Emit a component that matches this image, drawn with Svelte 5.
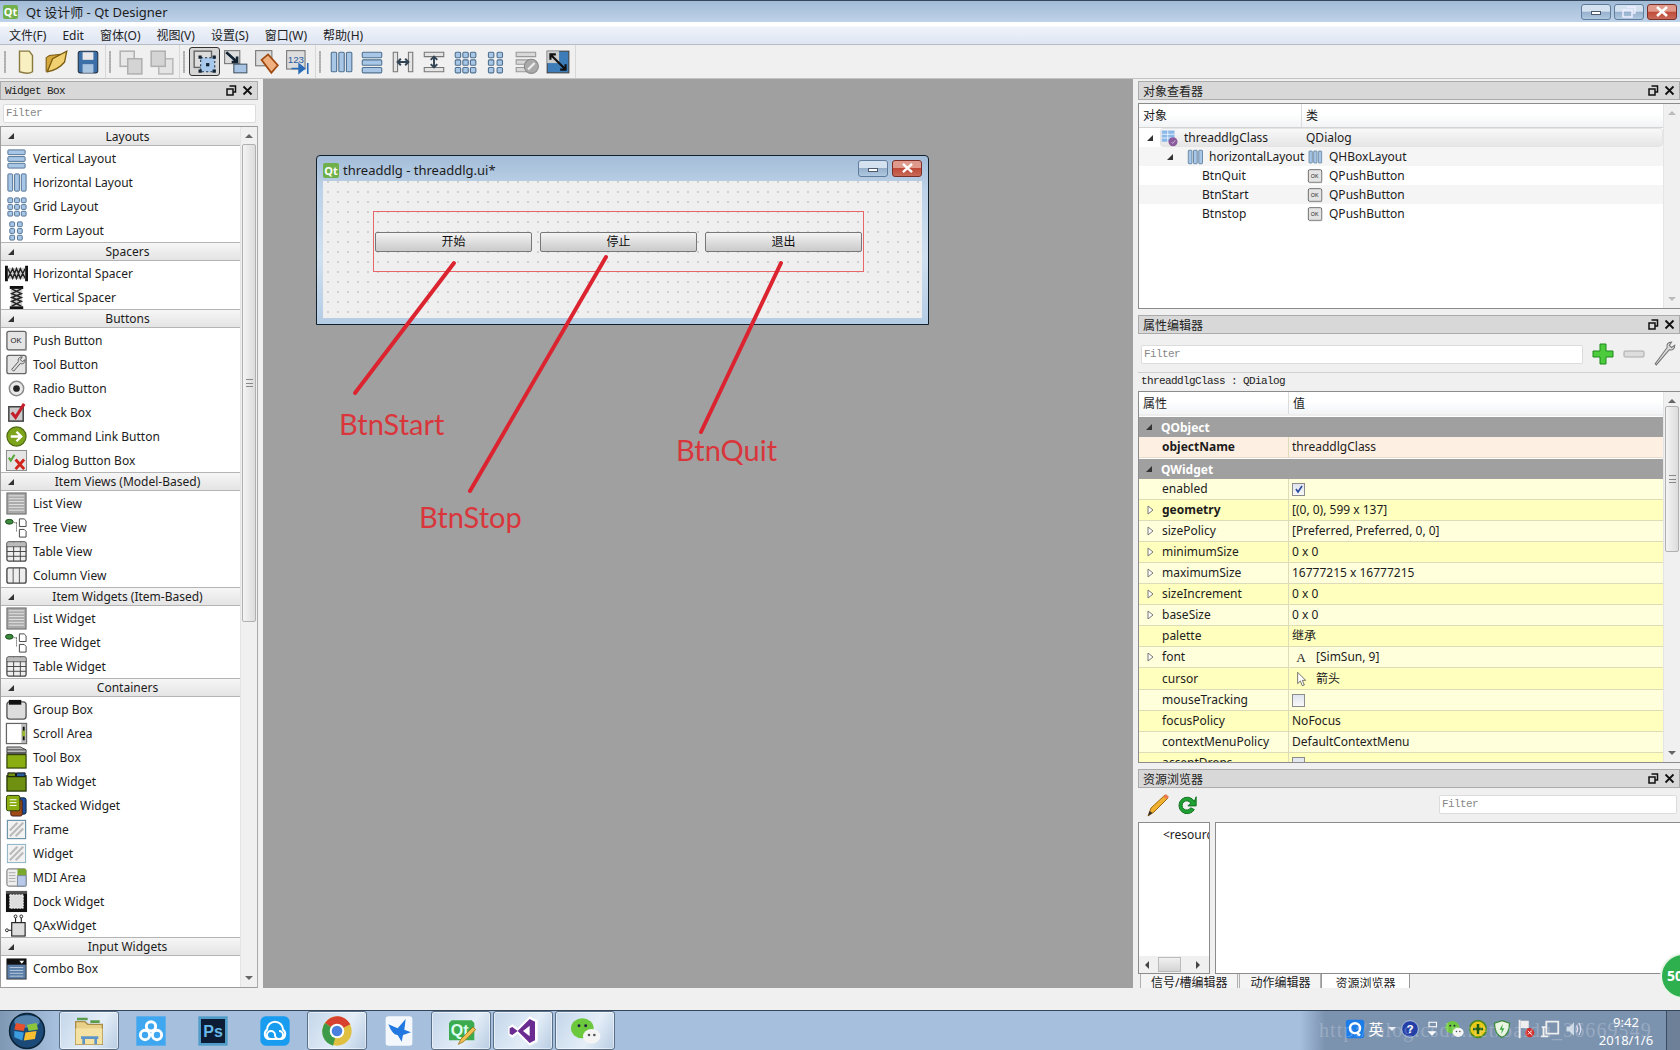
<script>
  const b = (x, y, w, h, f = '#a8c6e6', s = '#4f7090') =>
    `<rect x="${x}" y="${y}" width="${w}" height="${h}" rx="1" fill="${f}" stroke="${s}"/>`;
  const cells = (xs, ys, s) => xs.flatMap((x) => ys.map((y) => b(x, y, s, s))).join('');
  const p = (d, f = 'none', s = '#333', w = 1) => `<path d="${d}" fill="${f}" stroke="${s}" stroke-width="${w}"/>`;
  const lines = (x1, x2, ys, c = '#888') => ys.map((y) => `<path d="M${x1} ${y}H${x2}" stroke="${c}"/>`).join('');
  const okBtn = `<rect x="2" y="2.5" width="20" height="19" rx="2" fill="#e4e4e4" stroke="#666" stroke-width="1.4"/><path d="M3 22h19V6" fill="none" stroke="#999" stroke-width="1.4"/><text x="11.5" y="15" font-size="8" font-family="Liberation Sans" text-anchor="middle" fill="#222">OK</text>`;
  const listI = `<rect x="2" y="1" width="20" height="22" fill="#aaa" stroke="#666"/>` + lines(4, 20, [4, 7, 10, 13, 16, 19], '#e4e4e4');
  const treeI = `<ellipse cx="4.5" cy="6" rx="4" ry="2.5" fill="#3c8a3c" stroke="#1c4a1c"/><path d="M9 7h3M12 7v10" stroke="#333" stroke-dasharray="1 1"/><path d="M15 3h5l2 2v6h-7zM15 14h5l2 2v6h-7z" fill="#fff" stroke="#444"/>`;
  const tableI = `<rect x="2" y="2" width="20" height="20" rx="2" fill="#eee" stroke="#444" stroke-width="1.3"/><path d="M2 7h20M2 12h20M2 17h20M9 2v20M16 2v20" stroke="#444"/><path d="M2.5 2.5h19v4h-19z" fill="#bbb"/>`;
  const hatch = `<rect x="2.5" y="2.5" width="19" height="19" fill="#f2f2f2" stroke="#6a93a8" stroke-width="1.2"/><path d="M5 13l8-8M5 19l14-14M11 19l8-8" stroke="#bbb" stroke-width="2.4"/>`;
  const hlay = b(3, 3, 5, 18) + b(10, 3, 5, 18) + b(17, 3, 5, 18);
  const vlay = b(3, 3, 18, 5) + b(3, 10, 18, 5) + b(3, 17, 18, 5);

  const icons = {
    vlayout: vlay,
    hlayout: hlay,
    grid: cells([3, 10, 17], [3, 10, 17], 5),
    form: cells([5, 13], [3, 10, 17], 5),
    hspacer: `<path d="M1.5 4v16M22.5 4v16" stroke="#111" stroke-width="3"/><path d="M3 6h18v12H3z" fill="#ccc"/><path d="M3 7l5 10 4-10 4 10 5-10M3 17l5-10 4 10 4-10 5 10" fill="none" stroke="#222" stroke-width="1.5"/>`,
    vspacer: `<path d="M5 1.5h14M5 22.5h14" stroke="#111" stroke-width="3"/><path d="M6 3h12v18H6z" fill="#ccc"/><path d="M7 3l10 5-10 4 10 4-10 5M17 3L7 8l10 4-10 4 10 5" fill="none" stroke="#222" stroke-width="1.5"/>`,
    push: okBtn,
    tool: `<rect x="2" y="2.5" width="20" height="19" rx="2" fill="#e4e4e4" stroke="#666" stroke-width="1.4"/>` + p('M7 17l7-8c-1-3 1-5 4-5l-2 3 2 2 3-2c0 3-2 5-5 4l-7 8z', '#ddd', '#555'),
    radio: `<circle cx="12" cy="12" r="7.5" fill="#e8e8e8" stroke="#888" stroke-width="1.5"/><circle cx="12" cy="12" r="3.5" fill="#222"/>`,
    check: `<rect x="4" y="6" width="15" height="15" fill="#ccc" stroke="#444" stroke-width="1.6"/><path d="M7 12l4 5 9-14" fill="none" stroke="#c4202c" stroke-width="3.2"/>`,
    link: `<circle cx="12" cy="12" r="10" fill="#7da51c" stroke="#4e6a10" stroke-width="1.2"/><path d="M6 12h10M12 7l5 5-5 5" fill="none" stroke="#fff" stroke-width="2.4"/>`,
    dialogbb: `<rect x="1.5" y="1.5" width="21" height="21" fill="#e4e4e4" stroke="#888"/><path d="M4 9l2 3 4-6" fill="none" stroke="#5aa63c" stroke-width="2.2"/><path d="M11 11l9 10M20 11l-9 10" stroke="#d0241c" stroke-width="3"/>`,
    list: listI,
    tree: treeI,
    table: tableI,
    column: `<rect x="2" y="4" width="20" height="16" rx="2" fill="#eee" stroke="#444" stroke-width="1.4"/><path d="M8.5 4v16M15 4v16" stroke="#555"/>`,
    group: `<rect x="2" y="4" width="20" height="18" rx="3" fill="#ddd" stroke="#555" stroke-width="1.4"/><path d="M4 2h13v5H4z" fill="#111"/>`,
    scroll: `<rect x="1.5" y="1.5" width="21" height="21" fill="#fff" stroke="#666" stroke-width="1.3"/><path d="M17 2h5v20h-5z" fill="#bbb"/><path d="M19.5 5v14" stroke="#111" stroke-width="2"/><path d="M18 9h3v6h-3z" fill="#9ab82c"/>`,
    toolbox: `<path d="M2 1h14l6 3v4H2z" fill="#bbb" stroke="#444"/><path d="M2 4h20M2 7h20" stroke="#444"/><rect x="2" y="9" width="20" height="14" fill="#8aae12" stroke="#2a3a08" stroke-width="1.2"/>`,
    tab: `<rect x="2" y="6" width="20" height="16" fill="#6f9010" stroke="#1c2a04" stroke-width="1.2"/><path d="M3 3h8v4H3z" fill="#6f9010" stroke="#111"/><path d="M12 3h9v4h-9z" fill="#2a5c9c" stroke="#111"/>`,
    stacked: `<rect x="10" y="4" width="12" height="17" rx="2" fill="#1d4f9c" stroke="#123"/><rect x="6" y="6" width="12" height="17" rx="2" fill="#a04a16" stroke="#422"/><rect x="1.5" y="1.5" width="14" height="16" rx="2" fill="#8aae12" stroke="#2a3a08"/><path d="M5 6h7M5 9h7M5 12h7" stroke="#fff"/>`,
    frame: hatch,
    widget: `<rect x="2.5" y="2.5" width="19" height="19" fill="#f2f2f2" stroke="#8ab0c0"/><path d="M5 13l8-8M5 19l14-14M11 19l8-8" stroke="#bbb" stroke-width="2.4"/>`,
    mdi: `<rect x="2" y="3" width="20" height="18" rx="2" fill="#eee" stroke="#666"/><path d="M13 3h9v7h-9z" fill="#7aa82c"/><path d="M13 10h9v11h-9z" fill="#b8c8e8" stroke="#789"/>` + lines(4, 11, [7, 10, 13, 16], '#aaa'),
    dock: `<rect x="1" y="1" width="22" height="22" fill="#111"/><path d="M1 1h22v3H1z" fill="#555"/><rect x="5" y="5" width="14" height="14" fill="#ddd" stroke="#fff" stroke-dasharray="2 1"/>`,
    qax: `<rect x="7" y="9" width="14" height="14" fill="#ddd" stroke="#222" stroke-width="1.2"/><path d="M1 17h6M11 9V4M17 9V4" stroke="#222" stroke-width="1.2"/><circle cx="2" cy="17" r="1.5" fill="#fff" stroke="#222"/><circle cx="11" cy="2.5" r="1.5" fill="#fff" stroke="#222"/><circle cx="17" cy="2.5" r="1.5" fill="#fff" stroke="#222"/>`,
    combo: `<rect x="2" y="2" width="20" height="21" fill="#5a7ea8" stroke="#333"/><path d="M2 2h20v6H2z" fill="#111"/><path d="M15 4h5l-2.500 3z" fill="#fff"/>` + lines(5, 19, [11, 14, 17, 20], '#bcd'),
    fnew: p('M6 2h9l3 4v15c-3 2-9 1-12 0z', '#f8f0c0', '#8a7a40', 1.3),
    fopen: `<path d="M2 21V8l3-2 10-1-1 4" fill="#d4a83c" stroke="#7c5c10"/><path d="M3 21l5-12 13-7-2 10c-4 5-10 8-16 9z" fill="#f0d070" stroke="#7c5c10" stroke-width="1.2"/>`,
    fsave: `<rect x="3" y="2" width="18" height="20" rx="2" fill="#3c6ea8" stroke="#234"/><rect x="7" y="3" width="10" height="7" fill="#e8e8e8"/><rect x="7" y="14" width="10" height="8" fill="#a8c4e0"/>`,
    copya: `<rect x="2" y="2" width="13" height="14" fill="#e8e8e8" stroke="#b0b0b0" stroke-width="1.4"/><rect x="9" y="9" width="13" height="14" fill="#d4d4d4" stroke="#b0b0b0" stroke-width="1.4"/>`,
    copyb: `<rect x="9" y="9" width="13" height="14" fill="#e4e4e4" stroke="#b8b8b8" stroke-width="1.4"/><rect x="2" y="2" width="13" height="14" fill="#d4d4d4" stroke="#b0b0b0" stroke-width="1.4"/>`,
    edit: `<rect x="2" y="2" width="16" height="15" fill="#ddd" stroke="#666" stroke-width="1.3"/><rect x="8" y="8" width="13" height="13" fill="#a8c8ec" stroke="#234" stroke-dasharray="2 2"/><rect x="13" y="13" width="3" height="3" fill="#123"/><path d="M6 6h3v3H6zM19 6h3v3h-3zM6 19h3v3H6zM19 19h3v3h-3z" fill="#123"/>`,
    signal: `<rect x="1.500" y="1.500" width="14" height="12" fill="#ddd" stroke="#777"/><rect x="10" y="14" width="12" height="8" fill="#a8c4e4" stroke="#456"/><path d="M3 3l10 9M13 7v5H8" fill="none" stroke="#123" stroke-width="2.4"/>`,
    buddy: `<rect x="1.500" y="1.500" width="15" height="14" fill="#ddd" stroke="#777"/><path d="M7 10l6-5 9 10-6 7z" fill="#f0b080" stroke="#a04a10" stroke-width="1.6"/>`,
    taborder: `<rect x="1.500" y="1.500" width="17" height="17" fill="#ddd" stroke="#777"/><text x="2.500" y="13" font-size="9" font-family="Liberation Sans" fill="#2a5ca0">123</text><path d="M6 18h11M13 14l5 4-5 4zM21 13v10" fill="#2a6cb8" stroke="#2a6cb8" stroke-width="1.5"/>`,
    hsplit: `<path d="M3 3h4v18H3zM17 3h4v18h-4z" fill="#e4e4e4" stroke="#777"/><path d="M7 12h10M10 9l-3 3 3 3M14 9l3 3-3 3" fill="none" stroke="#345" stroke-width="1.8"/>`,
    vsplit: `<path d="M3 3h18v4H3zM3 17h18v4H3z" fill="#e4e4e4" stroke="#777"/><path d="M12 7v10M9 10l3-3 3 3M9 14l3 3 3-3" fill="none" stroke="#345" stroke-width="1.8"/>`,
    breakl: `<path d="M2 3h18v4H2zM2 10h12v4H2zM2 17h12v4H2z" fill="#d8d8d8" stroke="#999"/><circle cx="16" cy="16" r="6.500" fill="#aaa" stroke="#888"/><path d="M13 19l6-6" stroke="#eee" stroke-width="2"/>`,
    adjust: `<rect x="2" y="2" width="20" height="20" fill="#3c7cb8" stroke="#444"/><path d="M2 2h11v11H2z" fill="#ccc"/><path d="M5 5l14 14M5 10V5h5M19 14v5h-5" fill="none" stroke="#111" stroke-width="2"/>`,
    dlg: `<rect x="1" y="2" width="17" height="15" fill="#8ab8e8"/><path d="M1 7h17M1 12h17M9 2v15" stroke="#fff"/><circle cx="16" cy="17" r="6" fill="#8a5a9c"/><path d="M14 18l2 1 3-4" stroke="#dcd" fill="none"/>`,
    font: `<text x="12" y="20" font-size="20" font-family="Liberation Serif" text-anchor="middle" fill="#222">A</text>`,
    arrow: p('M7 2v17l4-4 3 7 3-1-3-7h5z', '#fff', '#333'),
    plus: p('M9 2h6v7h7v6h-7v7H9v-7H2V9h7z', '#4ccc3c', '#1c8a1c'),
    minus: `<rect x="2" y="9" width="20" height="6" rx="1" fill="#ddd" stroke="#aaa"/>`,
    wrench: p('M3 21l1 1 12-14c3 1 5-1 5-4l-3 2-2-2 2-3c-3 0-5 2-4 5z', '#ddd', '#777'),
    pencil: `<path d="M2 23l3-8L19 2l3 3L8 19z" fill="#f0b030" stroke="#a06810"/><path d="M17 4l3-3 3 3-2 2z" fill="#e87c50"/><path d="M2 23l1.500-5 3 2z" fill="#333"/>`,
    reload: `<path d="M20 8a9 9 0 1 0 0 9l-4-2a5 5 0 1 1 0-5l-3 3h9V3z" fill="#1fa032" stroke="#0c6c1a"/>`,
    orb: `<circle cx="12" cy="12" r="11" fill="#1c4a78" stroke="#0c2438"/><ellipse cx="12" cy="6" rx="8" ry="4" fill="#6c9cc4" opacity=".7"/><path d="M5 7l6 1-1 4-6-1z" fill="#e8502c"/><path d="M12 8l6-1 1 4-6 1z" fill="#8cc43c"/><path d="M4 12l6 1-1 5-5-2z" fill="#3c9ce0"/><path d="M11 13l7-1-1 5-7 1z" fill="#f8c030"/>`,
    folder: `<path d="M2 5h7l2 2h11v15H2z" fill="#e8d088" stroke="#a88c48"/><path d="M3 3h8M13 5h7" stroke="#5a9c4c" stroke-width="2"/><path d="M2 10h20v12H2z" fill="#f4e2a4"/><path d="M8 22v-5h9v5M6 17h13" fill="none" stroke="#5c94c8" stroke-width="2"/>`,
    baidu: `<rect x="1" y="1" width="22" height="22" fill="#3fa6f0"/><circle cx="12" cy="8.500" r="3.500" fill="none" stroke="#fff" stroke-width="2.200"/><circle cx="7.500" cy="15" r="3.500" fill="none" stroke="#fff" stroke-width="2.200"/><circle cx="16.500" cy="15" r="3.500" fill="none" stroke="#fff" stroke-width="2.200"/>`,
    ps: `<rect x="1" y="1" width="22" height="22" fill="#4f9cc8"/><rect x="3" y="3" width="18" height="18" fill="#0c1c34"/><text x="12" y="16.500" font-size="12" font-weight="bold" font-family="Liberation Sans" text-anchor="middle" fill="#68b8e8">Ps</text>`,
    cloud: `<rect x="1" y="1" width="22" height="22" rx="4" fill="#189cf0"/><path d="M7 18a4 4 0 0 1-1-7 6 6 0 0 1 12 0 4 4 0 0 1-1 7zM9 18a3 3 0 1 1 3-3 3 3 0 1 0 3-3" fill="none" stroke="#fff" stroke-width="1.500"/>`,
    chrome: `<circle cx="12" cy="12" r="11" fill="#e0c040"/><path d="M12 12L3 6a11 11 0 0 1 19 1z" fill="#d84030"/><path d="M12 12L3 6a11 11 0 0 0 6 17z" fill="#3c9a48"/><circle cx="12" cy="12" r="5.500" fill="#fff"/><circle cx="12" cy="12" r="4" fill="#4a80e0"/>`,
    bird: `<rect x="2" y="1" width="20" height="22" rx="2" fill="#f4f8fc"/><path d="M4 7l7 3 6-7-1 8 5 2-6 2-1 5-3-5c-3 0-5-3-7-8z" fill="#2078e0"/>`,
    qtpen: `<path d="M5 4h15l2 2v13H3V6z" fill="#3cab50"/><text x="11" y="16" font-size="12" font-weight="bold" font-family="Liberation Sans" text-anchor="middle" fill="#dfe">Qt</text><path d="M10 22l2-4 9-9 2 2-9 9z" fill="#f0c050" stroke="#987020" stroke-width=".6"/>`,
    vs: `<path d="M17 1l6 3v16l-6 3L8 14l-4 3-3-2V9l3-2 4 3z" fill="#fff"/><path d="M17 3l4 2v14l-4 2L8 12l-4 3-2-1v-4l2-1 4 3zM17 8l-5 4 5 4z" fill="#6a2c91" fill-rule="evenodd"/>`,
    wechat: `<ellipse cx="10" cy="10" rx="8.500" ry="7.500" fill="#6cc83c"/><ellipse cx="17" cy="16" rx="6.500" ry="5.500" fill="#f4f4f4"/><circle cx="7.500" cy="8" r="1.100" fill="#224"/><circle cx="12.500" cy="8" r="1.100" fill="#224"/><circle cx="15" cy="15" r="1" fill="#555"/><circle cx="19" cy="15" r="1" fill="#555"/>`,
    trayq: `<rect x="1" y="1" width="22" height="22" rx="3" fill="#1c7ce8"/><circle cx="12" cy="11" r="6" fill="none" stroke="#fff" stroke-width="3"/><path d="M14 16l4 4" stroke="#fff" stroke-width="3"/>`,
    help: `<circle cx="12" cy="12" r="10" fill="#2440a8" stroke="#bcd"/><text x="12" y="17" font-size="14" font-weight="bold" font-family="Liberation Sans" text-anchor="middle" fill="#fff">?</text>`,
    restore: `<path d="M9 5h10v9h-4M5 10h10v9H5z" fill="none" stroke="#fff" stroke-width="2"/>`,
    caret: `<path d="M6 15h12l-6 6z" fill="#fff"/><path d="M8 3h10v6H8z" fill="none" stroke="#fff" stroke-width="1.500"/>`,
    plusg: `<circle cx="12" cy="12" r="10" fill="#e8c818" stroke="#4a8a20" stroke-width="2"/><path d="M12 6v12M6 12h12" stroke="#1c5c10" stroke-width="3"/>`,
    shield: `<path d="M12 2l9 3c0 8-2 14-9 17C5 19 3 13 3 5z" fill="#e8f4e0" stroke="#3c8a3c" stroke-width="1.500"/><path d="M13 6l-4 7h3l-1 5 4-7h-3z" fill="#3ca83c"/>`,
    flag: `<path d="M5 2v20" stroke="#eee" stroke-width="2"/><path d="M6 3h9v8H6z" fill="#eee"/><circle cx="16" cy="16" r="5" fill="#d02c2c"/><path d="M14 14l4 4M18 14l-4 4" stroke="#fff"/>`,
    net: `<path d="M8 4h13v13H8zM3 10h4M5 10v10M2 20h8" fill="none" stroke="#eee" stroke-width="2"/>`,
    sound: `<path d="M3 9h4l5-5v16l-5-5H3z" fill="#ccd8e4"/><path d="M15 8c2 3 2 5 0 8M18 5c3 5 3 9 0 14" fill="none" stroke="#dde" stroke-width="1.500"/>`,
  };

  const menus = ['文件(F)', 'Edit', '窗体(O)', '视图(V)', '设置(S)', '窗口(W)', '帮助(H)'];
  const toolGroups = [
    ['fnew', 'fopen', 'fsave'],
    ['copya', 'copyb'],
    ['edit', 'signal', 'buddy', 'taborder'],
    ['hlayout', 'vlayout', 'hsplit', 'vsplit', 'grid', 'form', 'breakl', 'adjust'],
  ];
  const toolbox = [
    ['Layouts', [['vlayout', 'Vertical Layout'], ['hlayout', 'Horizontal Layout'], ['grid', 'Grid Layout'], ['form', 'Form Layout']]],
    ['Spacers', [['hspacer', 'Horizontal Spacer'], ['vspacer', 'Vertical Spacer']]],
    ['Buttons', [['push', 'Push Button'], ['tool', 'Tool Button'], ['radio', 'Radio Button'], ['check', 'Check Box'], ['link', 'Command Link Button'], ['dialogbb', 'Dialog Button Box']]],
    ['Item Views (Model-Based)', [['list', 'List View'], ['tree', 'Tree View'], ['table', 'Table View'], ['column', 'Column View']]],
    ['Item Widgets (Item-Based)', [['list', 'List Widget'], ['tree', 'Tree Widget'], ['table', 'Table Widget']]],
    ['Containers', [['group', 'Group Box'], ['scroll', 'Scroll Area'], ['toolbox', 'Tool Box'], ['tab', 'Tab Widget'], ['stacked', 'Stacked Widget'], ['frame', 'Frame'], ['widget', 'Widget'], ['mdi', 'MDI Area'], ['dock', 'Dock Widget'], ['qax', 'QAxWidget']]],
    ['Input Widgets', [['combo', 'Combo Box']]],
  ];
  const props = [
    { group: 'QObject' },
    { name: 'objectName', value: 'threaddlgClass', bold: true, tone: 'peach' },
    { group: 'QWidget' },
    { name: 'enabled', check: true, tone: 'light' },
    { name: 'geometry', value: '[(0, 0), 599 x 137]', bold: true, more: true, tone: 'dark' },
    { name: 'sizePolicy', value: '[Preferred, Preferred, 0, 0]', more: true, tone: 'light' },
    { name: 'minimumSize', value: '0 x 0', more: true, tone: 'dark' },
    { name: 'maximumSize', value: '16777215 x 16777215', more: true, tone: 'light' },
    { name: 'sizeIncrement', value: '0 x 0', more: true, tone: 'dark' },
    { name: 'baseSize', value: '0 x 0', more: true, tone: 'light' },
    { name: 'palette', value: '继承', tone: 'dark' },
    { name: 'font', value: '[SimSun, 9]', icon: 'font', more: true, tone: 'light' },
    { name: 'cursor', value: '箭头', icon: 'arrow', tall: true, tone: 'dark' },
    { name: 'mouseTracking', check: false, tone: 'light' },
    { name: 'focusPolicy', value: 'NoFocus', tone: 'dark' },
    { name: 'contextMenuPolicy', value: 'DefaultContextMenu', tone: 'light' },
    { name: 'acceptDrops', check: false, tone: 'dark' },
  ];
  const objects = [
    { name: 'BtnQuit', cls: 'QPushButton' },
    { name: 'BtnStart', cls: 'QPushButton', alt: true },
    { name: 'Btnstop', cls: 'QPushButton' },
  ];
  const buttons = ['开始', '停止', '退出'];
  const tasks = [
    ['folder', true], ['baidu', false], ['ps', false], ['cloud', false],
    ['chrome', true], ['bird', false], ['qtpen', true], ['vs', true], ['wechat', true],
  ];
  const tray = [['trayq', 22, 20], ['', 20, 0], ['', 12, 0], ['help', 24, 20], ['caret', 20, 18], ['wechat', 24, 20], ['plusg', 24, 20], ['shield', 23, 20], ['flag', 25, 22], ['net', 24, 22], ['sound', 24, 20]];
</script>

{#snippet ic(name, size = 22)}
  <svg class="ic" width={size} height={size} viewBox="0 0 24 24">{@html icons[name]}</svg>
{/snippet}

{#snippet dockTitle(text, mono = false)}
  <div class="dock-title" class:mono>
    <span>{text}</span>
    <span class="dock-btns">
      <svg width="11" height="11" viewBox="0 0 11 11"><path d="M3.500 1h6v6h-2M1 4h6v6H1z" fill="none" stroke="#111" stroke-width="1.500"/></svg>
      <svg width="11" height="11" viewBox="0 0 11 11"><path d="M1.500 1.500l8 8M9.500 1.500l-8 8" stroke="#111" stroke-width="1.800"/></svg>
    </span>
  </div>
{/snippet}

{#snippet tri()}
  <svg class="tri" width="8" height="8" viewBox="0 0 8 8"><path d="M7 1v6H1z" fill="#333"/></svg>
{/snippet}

<div class="screen">
  <header class="titlebar">
    <span class="qt-logo small">Qt</span>
    <span class="title-text">Qt 设计师 - Qt Designer</span>
    <div class="win-btns">
      <span class="wb"><i class="min-mark"></i></span>
      <span class="wb"><svg width="14" height="12" viewBox="0 0 14 12"><path d="M5 1h8v6h-3M1 4h9v7H1z" fill="none" stroke="#eef" stroke-width="1.500"/></svg></span>
      <span class="wb close"><svg width="14" height="11" viewBox="0 0 14 11"><path d="M2 1l10 9M12 1L2 10" stroke="#fff" stroke-width="2.600"/></svg></span>
    </div>
  </header>

  <nav class="menubar">
    {#each menus as m}<span class="menu-item">{m}</span>{/each}
  </nav>

  <div class="toolbar">
    {#each toolGroups as group}
      <div class="tool-group">
        <i class="grip"></i>
        {#each group as t}
          <span class="tool" class:active={t === 'edit'}>{@render ic(t, 26)}</span>
        {/each}
      </div>
    {/each}
  </div>

  <main class="workspace">
    <aside class="left-dock">
      {@render dockTitle('Widget Box', true)}
      <div class="filter left-filter">Filter</div>
      <div class="toolbox-frame">
        <div class="toolbox-list">
          {#each toolbox as [cat, items]}
            <div class="cat">{@render tri()}<span>{cat}</span></div>
            {#each items as [icon, label]}
              <div class="tb-row">{@render ic(icon, 23)}<span>{label}</span></div>
            {/each}
          {/each}
        </div>
        <div class="vsb toolbox-sb">
          <i class="up"></i>
          <div class="thumb"><b></b></div>
          <i class="down"></i>
        </div>
      </div>
    </aside>

    <section class="canvas">
      <div class="dialog">
        <div class="dlg-title">
          <span class="qt-logo">Qt</span>
          <span class="dlg-name">threaddlg - threaddlg.ui*</span>
          <div class="dlg-btns">
            <span class="wb"><i class="min-mark"></i></span>
            <span class="wb close"><svg width="13" height="10" viewBox="0 0 14 11"><path d="M2 1l10 9M12 1L2 10" stroke="#fff" stroke-width="2.600"/></svg></span>
          </div>
        </div>
        <div class="dlg-client">
          <div class="hbox">
            {#each buttons as t}<div class="qbtn">{t}</div>{/each}
          </div>
        </div>
      </div>
    </section>

    <aside class="right-dock">
      {@render dockTitle('对象查看器')}
      <div class="inspector">
        <div class="tree-body">
          <div class="head-row"><span class="hc first">对象</span><span class="hc">类</span></div>
          <div class="obj-row root">
            <span class="arrow-cell">{@render tri()}</span>
            <div class="sel">
              <span class="name-cell">{@render ic('dlg', 18)}<span>threaddlgClass</span></span>
              <span class="cls-cell plain">QDialog</span>
            </div>
          </div>
          <div class="obj-row alt lvl1">
            <span class="name-cell full">
              <span class="arrow-cell">{@render tri()}</span>
              {@render ic('hlayout', 18)}<span>horizontalLayout</span>
            </span>
            <span class="cls-cell">{@render ic('hlayout', 16)}<span>QHBoxLayout</span></span>
          </div>
          {#each objects as o}
            <div class="obj-row" class:alt={o.alt}>
              <span class="name-cell full lvl2">{o.name}</span>
              <span class="cls-cell">{@render ic('push', 16)}<span>{o.cls}</span></span>
            </div>
          {/each}
        </div>
        <div class="vsb plain-sb"><i class="up"></i><i class="down"></i></div>
      </div>

      <div class="dock-gap">{@render dockTitle('属性编辑器')}</div>
      <div class="prop-tools">
        <div class="filter prop-filter">Filter</div>
        <span class="pt plus">{@render ic('plus', 24)}</span>
        <span class="pt">{@render ic('minus', 24)}</span>
        <span class="pt">{@render ic('wrench', 26)}</span>
      </div>
      <div class="class-label">threaddlgClass : QDialog</div>
      <div class="props">
        <div class="prop-body">
          <div class="head-row prop-head"><span class="hc pfirst">属性</span><span class="hc">值</span></div>
          {#each props as r}
            {#if r.group}
              <div class="prop-group">{@render tri()}<span>{r.group}</span></div>
            {:else}
              <div class="prop-row {r.tone}" class:tall={r.tall}>
                <span class="pname" class:bold={r.bold}>
                  <i class="exp">{#if r.more}<svg width="7" height="10" viewBox="0 0 7 10"><path d="M1 1l5 4-5 4z" fill="#fff" stroke="#777"/></svg>{/if}</i>
                  {r.name}
                </span>
                <span class="pval">
                  {#if r.check !== undefined}
                    <i class="cb">{#if r.check}<svg width="10" height="10" viewBox="0 0 10 10"><path d="M2 5l2 3 4-6" fill="none" stroke="#2a4a9c" stroke-width="1.600"/></svg>{/if}</i>
                  {:else}
                    {#if r.icon}<span class="pv-icon">{@render ic(r.icon, 16)}</span>{/if}{r.value}
                  {/if}
                </span>
              </div>
            {/if}
          {/each}
        </div>
        <div class="vsb prop-sb">
          <i class="up"></i>
          <div class="thumb"><b></b></div>
          <i class="down"></i>
        </div>
      </div>

      <div class="dock-gap">{@render dockTitle('资源浏览器')}</div>
      <div class="res-tools">
        <span class="rt">{@render ic('pencil', 24)}</span>
        <span class="rt">{@render ic('reload', 22)}</span>
        <div class="filter res-filter">Filter</div>
      </div>
      <div class="res-panes">
        <div class="res-tree">
          <div class="res-item">&lt;resource root&gt;</div>
          <div class="hsb"><i class="lt"></i><b></b><i class="rtt"></i></div>
        </div>
        <div class="res-view"></div>
      </div>
      <div class="tabs">
        <span class="tabx">信号/槽编辑器</span>
        <span class="tabx">动作编辑器</span>
        <span class="tabx on">资源浏览器</span>
      </div>
    </aside>
  </main>

  <div class="statusbar"></div>

  <footer class="taskbar">
    <span class="orb">{@render ic('orb', 38)}</span>
    <div class="task-list">
      {#each tasks as [icon, open]}
        <span class="task" class:open>{@render ic(icon, 32)}</span>
      {/each}
    </div>
    <div class="tray">
      {#each tray as [icon, w, size], i}
        <span class="tray-item" style="width:{w}px">
          {#if icon}{@render ic(icon, size)}{:else if i === 1}英{:else}<i class="tray-caret"></i>{/if}
        </span>
      {/each}
      <div class="clock"><span>9:42</span><span>2018/1/6</span></div>
      <i class="show-desk"></i>
    </div>
    <span class="watermark">http://blog.csdn.net/baidu_36669549</span>
  </footer>

  <svg class="notes" width="1680" height="1050">
    <g stroke="#dc2430" stroke-width="4" stroke-linecap="round">
      <path d="M454 263L355 393"/>
      <path d="M606 257L470 491"/>
      <path d="M781 263L701 432"/>
    </g>
    <g fill="#d9363c" font-family="Lato, sans-serif" font-size="29">
      <text x="339" y="435">BtnStart</text>
      <text x="419" y="528">BtnStop</text>
      <text x="676" y="461">BtnQuit</text>
    </g>
  </svg>
  <div class="badge">50</div>
</div>

<style>
  :global(body) {
    margin: 0;
    background: #f0f0f0;
  }

  .screen {
    position: relative;
    display: flex;
    flex-direction: column;
    width: 1680px;
    height: 1050px;
    overflow: hidden;
    background: #f0f0f0;
    color: #1c1c1c;
    font-family: "Noto Sans", "Noto Sans CJK SC", sans-serif;
    font-size: 12px;
  }

  .ic {
    display: block;
    flex: none;
  }

  .titlebar {
    display: flex;
    align-items: center;
    height: 22px;
    padding-left: 3px;
    border-top: 1px solid #35475a;
    box-sizing: border-box;
    background: linear-gradient(#a2bbd6, #bed2e8);
    font-size: 13px;
  }

  .qt-logo {
    display: inline-flex;
    align-items: center;
    justify-content: center;
    width: 16px;
    height: 15px;
    background: #6fb04a;
    color: #fff;
    border-radius: 2px;
    font-weight: 700;
    font-size: 11px;
    line-height: 1;
  }

  .qt-logo.small {
    width: 15px;
    height: 14px;
  }

  .title-text {
    margin-left: 8px;
  }

  .win-btns {
    display: flex;
    gap: 3px;
    margin-left: auto;
    margin-right: 3px;
  }

  .wb {
    display: flex;
    align-items: center;
    justify-content: center;
    width: 30px;
    height: 16px;
    box-sizing: border-box;
    border: 1px solid #5f7c9c;
    border-radius: 3px;
    background: linear-gradient(#d4e2f0 45%, #96b0cc 50%, #b0c8e0);
  }

  .wb.close {
    border-color: #7a3028;
    background: linear-gradient(#e09a8c 45%, #c04a38 50%, #c86a58);
  }

  .min-mark {
    display: block;
    width: 10px;
    height: 4px;
    margin-top: 3px;
    border: 1px solid #4a5a6c;
    box-sizing: border-box;
    background: #fff;
  }

  .menubar {
    display: flex;
    align-items: center;
    height: 23px;
    padding: 4px 0 0 1px;
    box-sizing: border-box;
    border-bottom: 1px solid #b8bcc4;
    background: linear-gradient(#ffffff 0 4px, #eef2f9 5px, #dfe6f3);
  }

  .menu-item {
    padding: 0 8px;
    color: #222;
  }

  .toolbar {
    display: flex;
    height: 33px;
    background: #f0f0f0;
  }

  .tool-group {
    display: flex;
    align-items: center;
    padding-right: 2px;
    box-sizing: content-box;
    border-right: 1px solid #d8d8d8;
    margin-right: -1px;
  }

  .grip {
    width: 2px;
    height: 22px;
    margin: 0 4px;
    background-image: radial-gradient(#aaa 0.8px, transparent 1px);
    background-size: 2px 3px;
  }

  .tool {
    display: flex;
    align-items: center;
    justify-content: center;
    width: 31px;
    height: 29px;
    box-sizing: border-box;
  }

  .tool.active {
    border: 1px solid #333;
    border-radius: 3px;
    background: #d6d6d6;
  }

  .workspace {
    display: flex;
    height: 910px;
    padding-top: 2px;
    box-sizing: border-box;
    border-top: 1px solid #c4c4c4;
  }

  .left-dock {
    display: flex;
    flex-direction: column;
    width: 258px;
    flex: none;
  }

  .dock-title {
    display: flex;
    align-items: center;
    justify-content: space-between;
    height: 19px;
    padding: 0 4px;
    box-sizing: border-box;
    border: 1px solid #ababab;
    background: #d8d8d8;
    color: #222;
    flex: none;
  }

  .dock-title.mono {
    font-family: "Liberation Mono", monospace;
    font-size: 11px;
    letter-spacing: -0.6px;
  }

  .dock-btns {
    display: flex;
    gap: 5px;
    align-items: center;
  }

  .filter {
    height: 19px;
    padding-left: 2px;
    box-sizing: border-box;
    border: 1px solid #dcdcdc;
    border-radius: 2px;
    background: #fff;
    color: #888;
    font-family: "Liberation Mono", monospace;
    font-size: 11px;
    letter-spacing: -0.6px;
    line-height: 17px;
  }

  .left-filter {
    margin: 4px 2px 3px 3px;
  }

  .toolbox-frame {
    display: flex;
    height: 862px;
    box-sizing: border-box;
    border: 1px solid #9c9c9c;
    border-right-color: #aaa;
    background: #fff;
  }

  .toolbox-list {
    flex: 1;
    min-width: 0;
    overflow: hidden;
  }

  .cat {
    position: relative;
    display: flex;
    align-items: center;
    justify-content: center;
    height: 18px;
    padding-left: 14px;
    box-sizing: content-box;
    border-bottom: 1px solid #b4b4b4;
    background: linear-gradient(#f6f6f6, #e4e4e4);
  }

  .tb-row + .cat {
    border-top: 1px solid #b4b4b4;
    height: 17px;
  }

  .cat .tri {
    position: absolute;
    left: 6px;
    top: 5px;
  }

  .tb-row {
    display: flex;
    align-items: center;
    gap: 5px;
    height: 24px;
    padding-left: 4px;
  }

  .vsb {
    display: flex;
    flex-direction: column;
    width: 17px;
    flex: none;
    background: #f0f0f0;
    border-left: 1px solid #e4e4e4;
    box-sizing: border-box;
  }

  .vsb .up,
  .vsb .down {
    display: block;
    width: 0;
    height: 0;
    margin: 7px auto;
    border: 4px solid transparent;
    flex: none;
  }

  .vsb .up {
    border-top: 0;
    border-bottom: 4px solid #666;
  }

  .vsb .down {
    margin-top: auto;
    border-bottom: 0;
    border-top: 4px solid #666;
  }

  .plain-sb .up {
    border-bottom-color: #bbb;
  }

  .plain-sb .down {
    border-top-color: #bbb;
  }

  .thumb {
    display: flex;
    align-items: center;
    justify-content: center;
    margin: 0 1px;
    border: 1px solid #b0b0b0;
    border-radius: 2px;
    background: linear-gradient(90deg, #f4f4f4, #dcdcdc);
    box-sizing: border-box;
  }

  .thumb b {
    display: block;
    width: 7px;
    height: 6px;
    border-top: 1px solid #888;
    border-bottom: 1px solid #888;
    background: linear-gradient(#888, #888) center / 100% 1px no-repeat;
  }

  .toolbox-sb .thumb {
    height: 478px;
    margin-top: -1px;
  }

  .prop-sb .thumb {
    height: 146px;
  }

  .prop-sb .up {
    margin: 7px auto 3px;
  }

  .canvas {
    position: relative;
    flex: none;
    width: 870px;
    margin: -2px 5px 0;
    background: #a0a0a0;
  }

  /* the form window sits freely on the designer canvas */
  .dialog {
    position: absolute;
    left: 53px;
    top: 76px;
    width: 613px;
    height: 170px;
    box-sizing: border-box;
    padding: 0 6px;
    border: 1px solid #12202c;
    border-radius: 4px 4px 0 0;
    background: linear-gradient(#a4bdd8 0, #bcd2e8 20%, #cfe0f0 60%, #b4cce4);
  }

  .dlg-title {
    display: flex;
    align-items: center;
    height: 25px;
    padding-top: 3px;
    box-sizing: border-box;
  }

  .dlg-name {
    margin-left: 4px;
    font-size: 13px;
  }

  .dlg-btns {
    display: flex;
    gap: 4px;
    margin-left: auto;
  }

  .dlg-btns .wb {
    height: 17px;
    margin-top: -4px;
  }

  .dlg-client {
    width: 599px;
    height: 137px;
    padding: 30px 0 0 50px;
    box-sizing: border-box;
    background-color: #efefef;
    background-image: radial-gradient(#666 0.55px, transparent 0.75px);
    background-size: 10px 10px;
    background-position: 0 -4px;
  }

  .hbox {
    display: flex;
    align-items: center;
    gap: 8px;
    width: 491px;
    height: 61px;
    padding: 0 1px;
    box-sizing: border-box;
    border: 1px solid #e8656a;
  }

  .qbtn {
    flex: 1;
    height: 20px;
    line-height: 18px;
    text-align: center;
    box-sizing: border-box;
    border: 1px solid #777;
    border-radius: 2px;
    background: linear-gradient(#f4f4f4, #dedede 50%, #cacaca);
    color: #111;
  }

  .right-dock {
    display: flex;
    flex-direction: column;
    flex: 1;
    min-width: 0;
  }

  .inspector {
    display: flex;
    height: 206px;
    margin-top: 3px;
    box-sizing: border-box;
    border: 1px solid #8c8c8c;
    border-right: 0;
    background: #fff;
    flex: none;
  }

  .tree-body {
    flex: 1;
    min-width: 0;
  }

  .head-row {
    display: flex;
    align-items: center;
    height: 24px;
    box-sizing: border-box;
    border-bottom: 1px solid #d4d4d4;
    background: linear-gradient(#ffffff 40%, #f2f4f6);
  }

  .hc {
    padding-left: 4px;
    height: 100%;
    line-height: 23px;
  }

  .hc.first {
    width: 163px;
    box-sizing: border-box;
    border-right: 1px solid #dcdcdc;
  }

  .obj-row {
    display: flex;
    align-items: center;
    height: 19px;
  }

  .obj-row.alt {
    background: #f5f5f5;
  }

  .root .arrow-cell {
    margin-left: 7px;
    width: 15px;
  }

  .arrow-cell {
    display: flex;
    width: 15px;
    flex: none;
  }

  .sel {
    display: flex;
    flex: 1;
    align-items: center;
    height: 19px;
    box-sizing: border-box;
    margin-left: -1px;
    border: 1px solid #e4e4e4;
    border-radius: 3px;
    background: linear-gradient(#f8f8f8, #e6e6e6);
  }

  .name-cell {
    display: flex;
    align-items: center;
    gap: 5px;
    width: 141px;
    flex: none;
    white-space: nowrap;
  }

  .name-cell.full {
    width: 163px;
    box-sizing: border-box;
    padding-left: 27px;
  }

  .name-cell.lvl2 {
    padding-left: 63px;
  }

  .cls-cell {
    display: flex;
    align-items: center;
    gap: 6px;
    padding-left: 5px;
  }

  .cls-cell.plain {
    padding-left: 4px;
  }

  .dock-gap {
    margin-top: 6px;
  }

  .prop-tools {
    display: flex;
    align-items: center;
    height: 38px;
    padding-left: 3px;
    flex: none;
    box-sizing: border-box;
    padding-top: 2px;
  }

  .prop-filter {
    width: 444px;
    margin-right: 4px;
  }

  .pt {
    display: flex;
    justify-content: center;
    width: 31px;
  }

  .class-label {
    height: 17px;
    line-height: 17px;
    padding-left: 3px;
    border-top: 1px solid #d0d0d0;
    font-family: "Liberation Mono", monospace;
    font-size: 11px;
    letter-spacing: -0.6px;
    flex: none;
  }

  .props {
    display: flex;
    height: 372px;
    box-sizing: border-box;
    border: 1px solid #8c8c8c;
    border-right: 0;
    background: #fff;
    overflow: hidden;
    flex: none;
    margin-top: 1px;
  }

  .prop-body {
    flex: 1;
    min-width: 0;
  }

  .prop-head {
    height: 24px;
    border-bottom: 2px solid #eee;
  }

  .hc.pfirst {
    width: 150px;
    box-sizing: border-box;
    border-right: 1px solid #dcdcdc;
  }

  .prop-group {
    display: flex;
    align-items: center;
    height: 20px;
    margin-top: 1px;
    padding-left: 6px;
    background: #a0a0a0;
    color: #fff;
    font-weight: 700;
    margin-bottom: 0;
  }

  .prop-group + .prop-row {
    margin-top: 0;
  }

  .prop-group span {
    margin-left: 8px;
  }

  .prop-row {
    display: flex;
    height: 21px;
    box-sizing: border-box;
    border-bottom: 1px solid #dcdcb8;
    line-height: 20px;
  }

  .prop-row.tall {
    height: 22px;
  }

  .prop-row.peach {
    background: #fdf0e2;
    border-bottom-color: #e8dccc;
  }

  .prop-row.light {
    background: #ffffdc;
  }

  .prop-row.dark {
    background: #ffffbe;
  }

  .pname {
    display: flex;
    align-items: center;
    width: 150px;
    box-sizing: border-box;
    border-right: 1px solid #dcdcb8;
    padding-left: 8px;
    flex: none;
  }

  .pname.bold {
    font-weight: 700;
  }

  .exp {
    display: flex;
    width: 15px;
    flex: none;
  }

  .pval {
    display: flex;
    align-items: center;
    padding-left: 3px;
  }

  .pv-icon {
    margin-right: 7px;
    margin-left: 1px;
  }

  .cb {
    display: flex;
    align-items: center;
    justify-content: center;
    width: 13px;
    height: 13px;
    box-sizing: border-box;
    border: 1px solid #8c8c8c;
    background: linear-gradient(#dfe4ee, #f8f8f8);
  }

  .res-tools {
    display: flex;
    align-items: center;
    height: 33px;
    padding-left: 5px;
    flex: none;
  }

  .rt {
    width: 29px;
    display: flex;
    justify-content: center;
  }

  .res-filter {
    width: 238px;
    margin-left: auto;
    margin-right: 3px;
  }

  .res-panes {
    display: flex;
    gap: 5px;
    height: 152px;
    flex: none;
    margin-top: 1px;
  }

  .res-tree {
    display: flex;
    flex-direction: column;
    width: 72px;
    box-sizing: border-box;
    border: 1px solid #8c8c8c;
    background: #fff;
    overflow: hidden;
    flex: none;
  }

  .res-item {
    flex: 1;
    padding: 3px 0 0 24px;
    white-space: nowrap;
  }

  .hsb {
    display: flex;
    align-items: center;
    height: 17px;
    background: #f0f0f0;
  }

  .hsb b {
    width: 23px;
    height: 15px;
    margin-left: 9px;
    border: 1px solid #bbb;
    box-sizing: border-box;
    background: linear-gradient(#f0f0f0, #d4d4d4);
  }

  .hsb .lt,
  .hsb .rtt {
    width: 0;
    height: 0;
    border: 4px solid transparent;
  }

  .hsb .lt {
    border-left: 0;
    border-right: 4px solid #444;
    margin-left: 6px;
  }

  .hsb .rtt {
    border-right: 0;
    border-left: 4px solid #444;
    margin-left: 15px;
  }

  .res-view {
    flex: 1;
    box-sizing: border-box;
    border: 1px solid #8c8c8c;
    border-right: 0;
    background: #fff;
  }

  .tabs {
    display: flex;
    align-items: flex-start;
    padding-left: 2px;
    flex: none;
  }

  .tabx {
    height: 18px;
    line-height: 17px;
    padding: 0 10px;
    box-sizing: border-box;
    border: 1px solid #b0b0b0;
    border-top: 0;
    background: #f4f4f4;
    margin-right: 1px;
  }

  .tabx.on {
    height: 20px;
    line-height: 20px;
    padding: 0 13px;
    margin: 0 0 0 -1px;
    background: #fff;
    border-color: #999;
  }

  .statusbar {
    height: 22px;
    background: #f0f0f0;
    flex: none;
  }

  .taskbar {
    position: relative;
    display: flex;
    align-items: center;
    height: 40px;
    flex: none;
    box-sizing: border-box;
    border-top: 1px solid #33465a;
    background: linear-gradient(90deg, #7e98b4, #a5bfdd 56px, #a5bfdd 1300px, #7c93b0 1325px);
    color: #fff;
  }

  .orb {
    display: flex;
    justify-content: center;
    width: 54px;
    margin-right: 5px;
    flex: none;
  }

  .task-list {
    display: flex;
    gap: 2px;
  }

  .task {
    display: flex;
    align-items: center;
    justify-content: center;
    width: 60px;
    height: 39px;
    box-sizing: border-box;
  }

  .task.open {
    border: 1px solid #5a7088;
    border-radius: 3px;
    background: linear-gradient(120deg, #c4d6ea, #e4eef8 60%, #b8cce2);
    box-shadow: inset 0 0 0 1px rgba(255, 255, 255, 0.5);
  }

  .tray {
    display: flex;
    align-items: center;
    margin-left: auto;
    height: 100%;
    font-size: 15px;
  }

  .tray-item {
    display: flex;
    align-items: center;
    justify-content: center;
    margin-top: -4px;
  }

  .tray-caret {
    width: 0;
    height: 0;
    border: 4px solid transparent;
    border-bottom: 0;
    border-top: 4px solid #e8eef4;
  }

  .clock {
    display: flex;
    flex-direction: column;
    align-items: center;
    width: 80px;
    font-size: 13px;
    line-height: 18px;
  }

  .show-desk {
    width: 14px;
    height: 100%;
    box-sizing: border-box;
    border-left: 1px solid #3c4c60;
    background: #6d8097;
  }

  .watermark {
    position: absolute;
    left: 1319px;
    top: 8px;
    font-family: "Liberation Serif", serif;
    font-size: 20px;
    letter-spacing: 1.1px;
    white-space: nowrap;
    color: rgba(255, 255, 255, 0.22);
  }

  .notes {
    position: absolute;
    left: 0;
    top: 0;
    pointer-events: none;
  }

  .badge {
    position: absolute;
    left: 1660px;
    top: 953px;
    width: 46px;
    height: 46px;
    box-sizing: border-box;
    padding-left: 5px;
    border: 2px solid #e8f4e8;
    border-radius: 50%;
    background: #2fb04e;
    color: #fff;
    font-weight: 700;
    font-size: 14px;
    line-height: 42px;
  }
</style>
